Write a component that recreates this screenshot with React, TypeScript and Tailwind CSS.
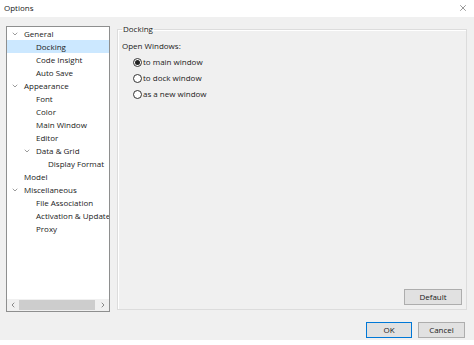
import { ChevronDown, ChevronLeft, ChevronRight, X } from 'lucide-react'

type Node = { label: string; level: number; open?: boolean; selected?: boolean }

const tree: Node[] = [
  { label: 'General', level: 0, open: true },
  { label: 'Docking', level: 1, selected: true },
  { label: 'Code Insight', level: 1 },
  { label: 'Auto Save', level: 1 },
  { label: 'Appearance', level: 0, open: true },
  { label: 'Font', level: 1 },
  { label: 'Color', level: 1 },
  { label: 'Main Window', level: 1 },
  { label: 'Editor', level: 1 },
  { label: 'Data & Grid', level: 1, open: true },
  { label: 'Display Format', level: 2 },
  { label: 'Model', level: 0 },
  { label: 'Miscellaneous', level: 0, open: true },
  { label: 'File Association', level: 1 },
  { label: 'Activation & Updater', level: 1 },
  { label: 'Proxy', level: 1 },
]

const indent = ['pl-[17px]', 'pl-[29px]', 'pl-[41px]']
const chevronPos = ['left-[4px]', 'left-[16px]', 'left-[28px]']

const Radio = ({ label, checked }: { label: string; checked?: boolean }) => (
  <div className="flex items-center h-[16px] gap-[1px]">
    <span className="w-[9px] h-[9px] rounded-full border border-[#333] bg-white flex items-center justify-center">
      {checked && <span className="w-[5px] h-[5px] rounded-full bg-[#222]" />}
    </span>
    <span>{label}</span>
  </div>
)

export default function App() {
  return (
    <div
      className="w-[474px] h-[345px] bg-white flex flex-col text-[8px] text-[#1a1a1a] overflow-hidden"
      style={{ fontFamily: '"Open Sans", "Noto Sans", sans-serif' }}
    >
      {/* Title bar */}
      <div className="h-[17px] flex items-center justify-between pl-[4px] pr-[6px] pb-[2px] shrink-0">
        <span>Options</span>
        <X size={10} strokeWidth={1.2} className="text-[#333]" />
      </div>

      {/* Dialog body */}
      <div className="h-[323px] bg-[#f0f0f0] flex flex-col pt-[9px] pl-[6px] pr-[7px] shrink-0">
        <div className="flex gap-[7px] h-[286px]">
          {/* Tree */}
          <div className="w-[104px] h-full border border-[#8e8f8f] bg-white flex flex-col">
            <div className="flex-1 overflow-hidden">
              {tree.map((n) => (
                <div
                  key={n.label}
                  className={`relative h-[13px] flex items-center whitespace-nowrap ${indent[n.level]} ${n.selected ? 'bg-[#cce8ff]' : ''}`}
                >
                  {n.open && (
                    <ChevronDown
                      size={8}
                      strokeWidth={1.6}
                      className={`absolute ${chevronPos[n.level]} text-[#444]`}
                    />
                  )}
                  {n.label}
                </div>
              ))}
            </div>
            <div className="h-[12px] flex items-center bg-[#f0f0f0]">
              <div className="w-[12px] flex justify-center text-[#555]">
                <ChevronLeft size={8} strokeWidth={2} />
              </div>
              <div className="h-[10px] w-[76px] bg-[#cdcdcd]" />
              <div className="flex-1 flex justify-end pr-[2px] text-[#555]">
                <ChevronRight size={8} strokeWidth={2} />
              </div>
            </div>
          </div>

          {/* Group box */}
          <div className="flex-1 flex flex-col">
            <fieldset className="h-full border border-[#dcdcdc] shadow-[inset_1px_1px_0_#fff] px-[4px] pb-[4px] flex flex-col min-w-0 -mt-[2px]">
              <legend className="px-[1px] ml-0 leading-[10px]">Docking</legend>
              <div className="mt-[6px]">Open Windows:</div>
              <div className="mt-[2px] pl-[11px] flex flex-col">
                <Radio label="to main window" checked />
                <Radio label="to dock window" />
                <Radio label="as a new window" />
              </div>
              <div className="flex-1" />
              <div className="flex justify-end">
                <button className="w-[58px] h-[16px] bg-[#e1e1e1] border border-[#adadad] flex items-center justify-center">
                  Default
                </button>
              </div>
            </fieldset>
          </div>
        </div>

        <div className="flex justify-end gap-[6px] mt-[10px] pr-[2px]">
          <button className="w-[46px] h-[16px] bg-[#e1e1e1] border border-[#0078d7] flex items-center justify-center">
            OK
          </button>
          <button className="w-[47px] h-[16px] bg-[#e1e1e1] border border-[#adadad] flex items-center justify-center">
            Cancel
          </button>
        </div>
      </div>
    </div>
  )
}
